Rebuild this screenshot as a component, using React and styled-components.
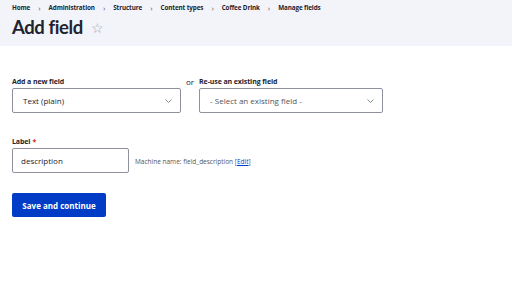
import React from "react";
import styled, { createGlobalStyle } from "styled-components";

const Global = createGlobalStyle`
  html, body {
    margin: 0;
    padding: 0;
    background: #ffffff;
    font-family: "Open Sans", "Noto Sans", sans-serif;
    color: #222330;
  }
`;

// Cabecera gris con migas y título
const Header = styled.div`
  background: #f3f4f9;
  padding: 3px 12px 0;
  height: 43px;
`;

const Breadcrumb = styled.ol`
  display: flex;
  align-items: center;
  list-style: none;
  margin: 0;
  padding: 0;
  font-size: 6.3px;
  font-weight: 700;
  line-height: 10px;
  letter-spacing: -0.1px;
`;

const Crumb = styled.li`
  display: flex;
  align-items: center;

  &:not(:last-child)::after {
    content: "›";
    font-weight: 400;
    color: #55565b;
    margin: 0 8px 0 8px;
    font-size: 8px;
  }
`;

const TitleRow = styled.div`
  display: flex;
  align-items: center;
  gap: 8px;
  margin-top: 3px;
`;

const Title = styled.h1`
  margin: 0;
  font-family: Lato, "Open Sans", sans-serif;
  font-size: 18.5px;
  font-weight: 700;
  line-height: 22px;
  letter-spacing: -0.4px;
`;

const Star = styled.span`
  font-size: 14px;
  color: #a2a4ad;
  line-height: 1;
  margin-top: 2px;
`;

// Formulario
const Form = styled.div`
  padding: 31px 12px 0;
`;

const FieldRow = styled.div`
  display: flex;
  align-items: flex-start;
`;

const Field = styled.div`
  display: flex;
  flex-direction: column;
`;

const Label = styled.label`
  font-size: 7px;
  font-weight: 700;
  line-height: 9px;
  margin-bottom: 2px;
  letter-spacing: -0.1px;
`;

const Required = styled.span`
  color: #dc2323;
  margin-left: 2px;
`;

const Or = styled.span`
  font-size: 8px;
  line-height: 9px;
  margin: 0 5px 0 5px;
`;

const Select = styled.div`
  box-sizing: border-box;
  width: ${(p) => p.w}px;
  height: 25px;
  border: 1px solid #8e929c;
  border-radius: 2px;
  display: flex;
  align-items: center;
  justify-content: space-between;
  padding: 0 8px 0 10px;
  font-size: 8px;
  color: ${(p) => (p.muted ? "#55565b" : "#222330")};
  background: #fff;
`;

const Input = styled.div`
  box-sizing: border-box;
  width: 117px;
  height: 25px;
  border: 1px solid #8e929c;
  border-radius: 2px;
  display: flex;
  align-items: center;
  padding: 0 8px;
  font-size: 8px;
`;

const LabelRow = styled.div`
  display: flex;
  align-items: center;
  gap: 6px;
`;

const Machine = styled.span`
  font-size: 6.5px;
  color: #55565b;
  margin-top: 1px;

  a {
    color: #003ecc;
    text-decoration: underline;
  }
`;

const LabelBlock = styled.div`
  margin-top: 24px;
  display: flex;
  flex-direction: column;
`;

const Button = styled.button`
  margin-top: 20px;
  width: 94px;
  height: 24px;
  border: none;
  border-radius: 2px;
  background: #003cc5;
  color: #fff;
  font-family: inherit;
  font-size: 8px;
  font-weight: 700;
  padding: 0;
`;

const Chevron = () => (
  <svg width="7" height="4" viewBox="0 0 7 4">
    <path d="M0.5 0.5l3 3 3-3" fill="none" stroke="#6b6e78" strokeWidth="0.8" />
  </svg>
);

const App = () => (
  <>
    <Global />
    <Header>
      <Breadcrumb>
        <Crumb>Home</Crumb>
        <Crumb>Administration</Crumb>
        <Crumb>Structure</Crumb>
        <Crumb>Content types</Crumb>
        <Crumb>Coffee Drink</Crumb>
        <Crumb>Manage fields</Crumb>
      </Breadcrumb>
      <TitleRow>
        <Title>Add field</Title>
        <Star>☆</Star>
      </TitleRow>
    </Header>
    <Form>
      <FieldRow>
        <Field>
          <Label>Add a new field</Label>
          <Select w={169}>
            Text (plain)
            <Chevron />
          </Select>
        </Field>
        <Or>or</Or>
        <Field>
          <Label>Re-use an existing field</Label>
          <Select w={184} muted>
            - Select an existing field -
            <Chevron />
          </Select>
        </Field>
      </FieldRow>
      <LabelBlock>
        <Label>
          Label<Required>*</Required>
        </Label>
        <LabelRow>
          <Input>description</Input>
          <Machine>
            Machine name: field_description [<a href="#">Edit</a>]
          </Machine>
        </LabelRow>
      </LabelBlock>
      <Button>Save and continue</Button>
    </Form>
  </>
);

export default App;
